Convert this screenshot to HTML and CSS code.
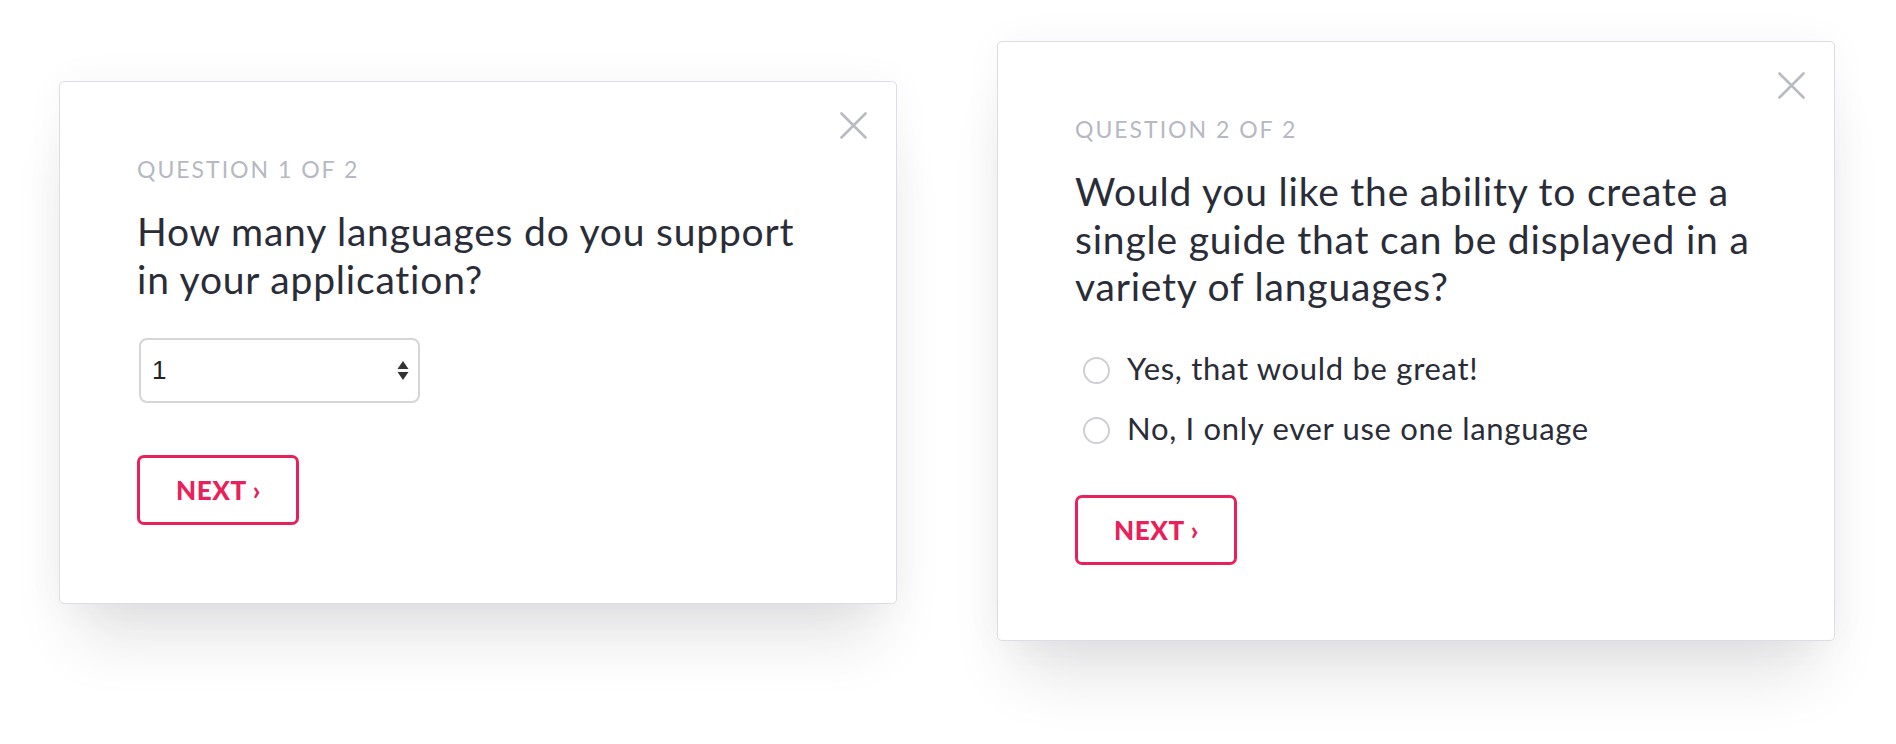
FILE: index.html
```html
<!DOCTYPE html>
<html lang="en">
<head>
<meta charset="utf-8">
<title>Survey</title>
<link rel="stylesheet" href="styles.css">
</head>
<body>
<div class="stage">
  <section class="card card-one">
    <button class="close" aria-label="Close">
      <svg viewBox="0 0 27 27" width="27" height="27"><path d="M1.5 1.5 L25.5 25.5 M25.5 1.5 L1.5 25.5" stroke="#b9bbc3" stroke-width="2.6" stroke-linecap="round" fill="none"/></svg>
    </button>
    <div class="label">QUESTION 1 OF 2</div>
    <h2 class="question">How many languages do you support<br>in your application?</h2>
    <div class="select">
      <span class="select-value">1</span>
      <svg class="select-arrows" viewBox="0 0 14 24" width="14" height="24"><path d="M7 2 L12.5 10 L1.5 10 Z M1.5 13 L12.5 13 L7 21 Z" fill="#333"/></svg>
    </div>
    <button class="next">NEXT ›</button>
  </section>
  <section class="card card-two">
    <button class="close" aria-label="Close">
      <svg viewBox="0 0 27 27" width="27" height="27"><path d="M1.5 1.5 L25.5 25.5 M25.5 1.5 L1.5 25.5" stroke="#b9bbc3" stroke-width="2.6" stroke-linecap="round" fill="none"/></svg>
    </button>
    <div class="label">QUESTION 2 OF 2</div>
    <h2 class="question">Would you like the ability to create a<br>single guide that can be displayed in a<br>variety of languages?</h2>
    <ul class="options">
      <li class="option"><span class="radio"></span><span class="option-text">Yes, that would be great!</span></li>
      <li class="option"><span class="radio"></span><span class="option-text">No, I only ever use one language</span></li>
    </ul>
    <button class="next">NEXT ›</button>
  </section>
</div>
</body>
</html>
```

FILE: styles.css
```css
html, body {
  margin: 0;
  padding: 0;
  background: #ffffff;
}
body {
  width: 1896px;
  height: 744px;
  overflow: hidden;
  font-family: "Lato", "Open Sans", sans-serif;
}
.stage {
  display: flex;
  align-items: flex-start;
  gap: 100px;
  padding: 41px 0 0 59px;
}
.card {
  position: relative;
  box-sizing: border-box;
  width: 838px;
  background: #fff;
  border: 1px solid #dcdde6;
  border-radius: 5px;
  padding: 73px 30px 0 77px;
  box-shadow: 0 50px 60px -20px rgba(40, 42, 60, 0.14), 0 0 40px rgba(40, 42, 60, 0.04);
}
.card-one {
  margin-top: 40px;
  height: 523px;
}
.card-two {
  height: 600px;
}
.close {
  position: absolute;
  top: 30px;
  right: 29px;
  width: 27px;
  height: 27px;
  padding: 0;
  border: 0;
  background: none;
  display: block;
}
.close svg { display: block; }
.label {
  font-size: 23px;
  line-height: 28px;
  letter-spacing: 2px;
  color: #b6b8c2;
  font-weight: 400;
}
.question {
  margin: 25px 0 0;
  font-size: 39px;
  line-height: 47.5px;
  font-weight: 400;
  letter-spacing: 0.8px;
  color: #2a2d38;
  white-space: nowrap;
}
.select {
  box-sizing: border-box;
  margin: 35px 0 0 2px;
  width: 281px;
  height: 65px;
  border: 2px solid #d6d6d8;
  border-radius: 8px;
  display: flex;
  align-items: center;
  justify-content: space-between;
  padding: 0 8px 0 11px;
}
.select-value {
  font-family: "Liberation Sans", Arial, sans-serif;
  font-size: 26px;
  color: #222;
}
.select-arrows { display: block; }
.next {
  display: block;
  box-sizing: border-box;
  width: 162px;
  height: 70px;
  margin-top: 52px;
  border: 3.5px solid #e8215a;
  border-radius: 7px;
  background: #fff;
  color: #e8215a;
  font-family: "Lato", sans-serif;
  font-weight: 900;
  font-size: 26px;
  padding: 0 0 0 1px;
  letter-spacing: 0.6px;
}
.options {
  list-style: none;
  margin: 37px 0 0;
  padding: 0;
  display: flex;
  flex-direction: column;
  gap: 20px;
}
.option {
  display: flex;
  align-items: center;
  height: 40px;
}
.radio {
  box-sizing: border-box;
  width: 27px;
  height: 27px;
  border: 2px solid #cdcfd5;
  border-radius: 50%;
  margin: 5px 17px 0 8px;
  flex: none;
}
.option-text {
  font-size: 31px;
  letter-spacing: 0.7px;
  color: #2a2d38;
}
.card-two .next {
  margin-top: 47px;
}
```
